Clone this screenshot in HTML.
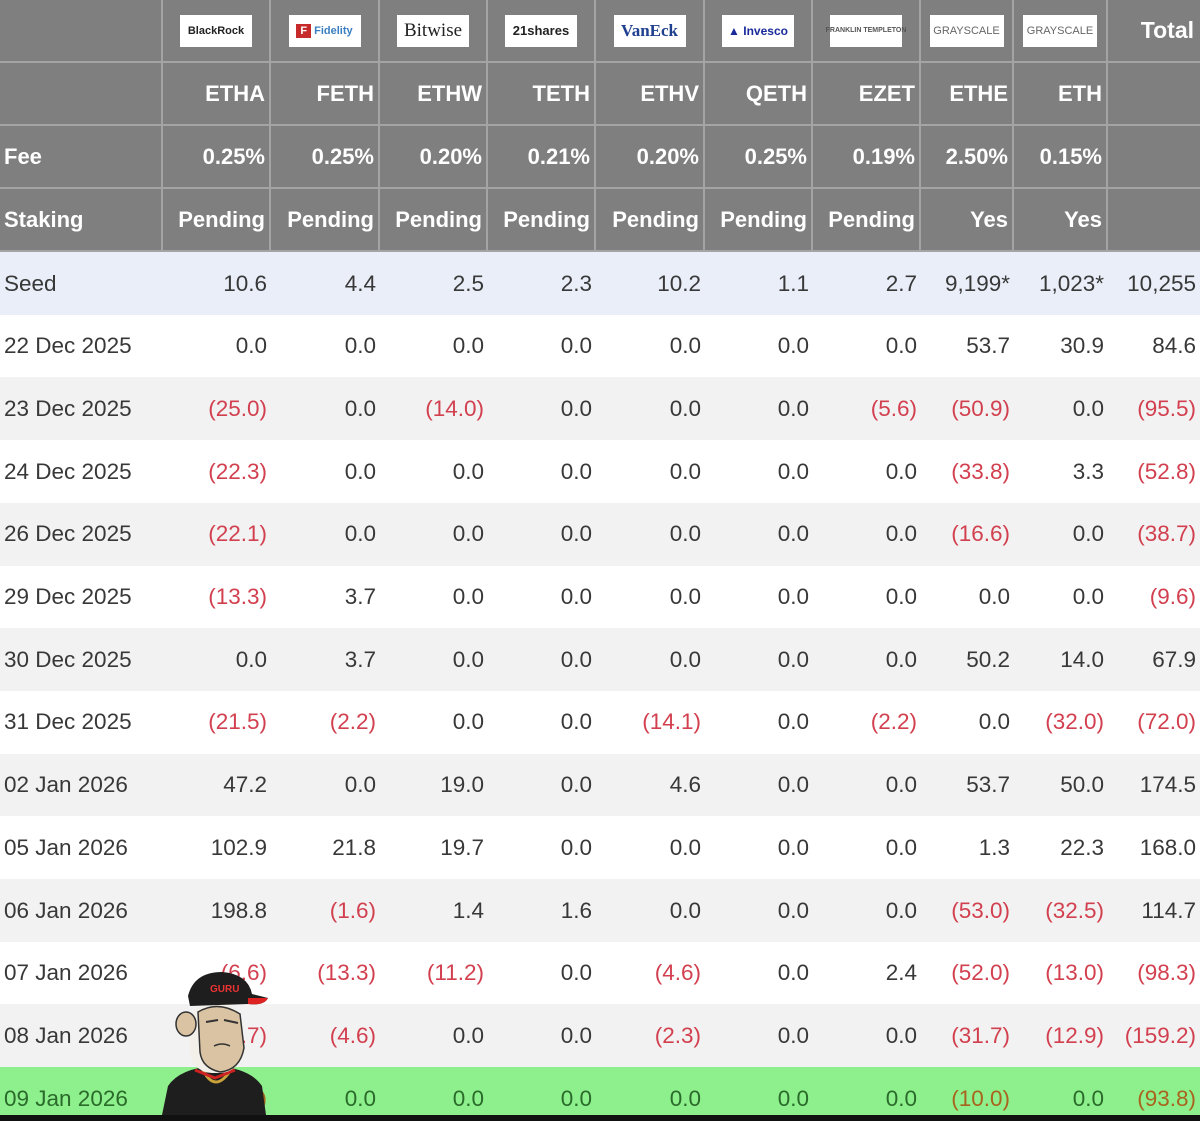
<!DOCTYPE html>
<html><head><meta charset="utf-8"><style>
*{margin:0;padding:0;box-sizing:border-box}
html,body{width:1200px;height:1121px;overflow:hidden}
body{background:#fff;font-family:"Liberation Sans",sans-serif;position:relative}
.r{position:absolute;left:0;width:1200px;height:63px;display:flex}
.r div{height:100%;display:flex;align-items:center;justify-content:flex-end;padding-right:4px;font-size:22.5px;color:#383838;white-space:nowrap}
.r div:first-child{justify-content:flex-start;padding-left:4px}
.h{background:#7f7f7f}
.h div{color:#fff;font-weight:bold;font-size:22px;border-right:2px solid #a4a4a4;border-bottom:2px solid #a4a4a4}
.h div:last-child{border-right:none}
.n{color:#d2404f!important}
.g div{color:#2a6a2a}
.g .n{color:#a8641e!important}
.c0{width:163px}.c1{width:108px}.c2{width:109px}.c3{width:108px}.c4{width:108px}.c5{width:109px}.c6{width:108px}.c7{width:108px}.c8{width:93px}.c9{width:94px}.c10{width:92px}
.logo{background:#fff;width:72px;height:32px;display:flex;align-items:center;justify-content:center;font-size:11px;color:#222;font-weight:bold;margin:0 auto}
.h0 div{justify-content:center!important;padding:0!important}
</style></head><body>
<div class="r h h0" style="top:0">
<div class="c0"></div>
<div class="c1"><span class="logo">BlackRock</span></div>
<div class="c2"><span class="logo"><span style="background:#c62a2a;color:#fff;padding:1px 4px;margin-right:3px">F</span><span style="color:#3a7fc1">Fidelity</span></span></div>
<div class="c3"><span class="logo" style="font-family:'Liberation Serif',serif;font-weight:normal;font-size:19px">Bitwise</span></div>
<div class="c4"><span class="logo" style="font-size:13px">21shares</span></div>
<div class="c5"><span class="logo" style="font-family:'Liberation Serif',serif;color:#1f3f8f;font-size:17px">VanEck</span></div>
<div class="c6"><span class="logo" style="color:#1a2a9a;font-size:12px">▲ Invesco</span></div>
<div class="c7"><span class="logo" style="font-size:7px;color:#555">FRANKLIN TEMPLETON</span></div>
<div class="c8"><span class="logo" style="font-weight:normal;color:#666;font-size:11px;width:74px">GRAYSCALE</span></div>
<div class="c9"><span class="logo" style="font-weight:normal;color:#666;font-size:11px;width:74px">GRAYSCALE</span></div>
<div class="c10" style="justify-content:flex-end!important;padding-right:6px!important;font-size:23px">Total</div>
</div>
<div class="r h" style="top:63px"><div class="c0"></div><div class="c1">ETHA</div><div class="c2">FETH</div><div class="c3">ETHW</div><div class="c4">TETH</div><div class="c5">ETHV</div><div class="c6">QETH</div><div class="c7">EZET</div><div class="c8">ETHE</div><div class="c9">ETH</div><div class="c10"></div></div>
<div class="r h" style="top:126px"><div class="c0">Fee</div><div class="c1">0.25%</div><div class="c2">0.25%</div><div class="c3">0.20%</div><div class="c4">0.21%</div><div class="c5">0.20%</div><div class="c6">0.25%</div><div class="c7">0.19%</div><div class="c8">2.50%</div><div class="c9">0.15%</div><div class="c10"></div></div>
<div class="r h" style="top:189px"><div class="c0">Staking</div><div class="c1">Pending</div><div class="c2">Pending</div><div class="c3">Pending</div><div class="c4">Pending</div><div class="c5">Pending</div><div class="c6">Pending</div><div class="c7">Pending</div><div class="c8">Yes</div><div class="c9">Yes</div><div class="c10"></div></div>

<div class="r" style="top:252px;background:#e9eef8"><div class="c0">Seed</div><div class="c1">10.6</div><div class="c2">4.4</div><div class="c3">2.5</div><div class="c4">2.3</div><div class="c5">10.2</div><div class="c6">1.1</div><div class="c7">2.7</div><div class="c8">9,199*</div><div class="c9">1,023*</div><div class="c10">10,255</div></div>
<div class="r" style="top:314.7px;background:#fff"><div class="c0">22 Dec 2025</div><div class="c1">0.0</div><div class="c2">0.0</div><div class="c3">0.0</div><div class="c4">0.0</div><div class="c5">0.0</div><div class="c6">0.0</div><div class="c7">0.0</div><div class="c8">53.7</div><div class="c9">30.9</div><div class="c10">84.6</div></div>
<div class="r" style="top:377.4px;background:#f2f2f2"><div class="c0">23 Dec 2025</div><div class="c1 n">(25.0)</div><div class="c2">0.0</div><div class="c3 n">(14.0)</div><div class="c4">0.0</div><div class="c5">0.0</div><div class="c6">0.0</div><div class="c7 n">(5.6)</div><div class="c8 n">(50.9)</div><div class="c9">0.0</div><div class="c10 n">(95.5)</div></div>
<div class="r" style="top:440.1px;background:#fff"><div class="c0">24 Dec 2025</div><div class="c1 n">(22.3)</div><div class="c2">0.0</div><div class="c3">0.0</div><div class="c4">0.0</div><div class="c5">0.0</div><div class="c6">0.0</div><div class="c7">0.0</div><div class="c8 n">(33.8)</div><div class="c9">3.3</div><div class="c10 n">(52.8)</div></div>
<div class="r" style="top:502.8px;background:#f2f2f2"><div class="c0">26 Dec 2025</div><div class="c1 n">(22.1)</div><div class="c2">0.0</div><div class="c3">0.0</div><div class="c4">0.0</div><div class="c5">0.0</div><div class="c6">0.0</div><div class="c7">0.0</div><div class="c8 n">(16.6)</div><div class="c9">0.0</div><div class="c10 n">(38.7)</div></div>
<div class="r" style="top:565.5px;background:#fff"><div class="c0">29 Dec 2025</div><div class="c1 n">(13.3)</div><div class="c2">3.7</div><div class="c3">0.0</div><div class="c4">0.0</div><div class="c5">0.0</div><div class="c6">0.0</div><div class="c7">0.0</div><div class="c8">0.0</div><div class="c9">0.0</div><div class="c10 n">(9.6)</div></div>
<div class="r" style="top:628.2px;background:#f2f2f2"><div class="c0">30 Dec 2025</div><div class="c1">0.0</div><div class="c2">3.7</div><div class="c3">0.0</div><div class="c4">0.0</div><div class="c5">0.0</div><div class="c6">0.0</div><div class="c7">0.0</div><div class="c8">50.2</div><div class="c9">14.0</div><div class="c10">67.9</div></div>
<div class="r" style="top:690.9px;background:#fff"><div class="c0">31 Dec 2025</div><div class="c1 n">(21.5)</div><div class="c2 n">(2.2)</div><div class="c3">0.0</div><div class="c4">0.0</div><div class="c5 n">(14.1)</div><div class="c6">0.0</div><div class="c7 n">(2.2)</div><div class="c8">0.0</div><div class="c9 n">(32.0)</div><div class="c10 n">(72.0)</div></div>
<div class="r" style="top:753.6px;background:#f2f2f2"><div class="c0">02 Jan 2026</div><div class="c1">47.2</div><div class="c2">0.0</div><div class="c3">19.0</div><div class="c4">0.0</div><div class="c5">4.6</div><div class="c6">0.0</div><div class="c7">0.0</div><div class="c8">53.7</div><div class="c9">50.0</div><div class="c10">174.5</div></div>
<div class="r" style="top:816.3px;background:#fff"><div class="c0">05 Jan 2026</div><div class="c1">102.9</div><div class="c2">21.8</div><div class="c3">19.7</div><div class="c4">0.0</div><div class="c5">0.0</div><div class="c6">0.0</div><div class="c7">0.0</div><div class="c8">1.3</div><div class="c9">22.3</div><div class="c10">168.0</div></div>
<div class="r" style="top:879px;background:#f2f2f2"><div class="c0">06 Jan 2026</div><div class="c1">198.8</div><div class="c2 n">(1.6)</div><div class="c3">1.4</div><div class="c4">1.6</div><div class="c5">0.0</div><div class="c6">0.0</div><div class="c7">0.0</div><div class="c8 n">(53.0)</div><div class="c9 n">(32.5)</div><div class="c10">114.7</div></div>
<div class="r" style="top:941.7px;background:#fff"><div class="c0">07 Jan 2026</div><div class="c1 n">(6.6)</div><div class="c2 n">(13.3)</div><div class="c3 n">(11.2)</div><div class="c4">0.0</div><div class="c5 n">(4.6)</div><div class="c6">0.0</div><div class="c7">2.4</div><div class="c8 n">(52.0)</div><div class="c9 n">(13.0)</div><div class="c10 n">(98.3)</div></div>
<div class="r" style="top:1004.4px;background:#f2f2f2"><div class="c0">08 Jan 2026</div><div class="c1 n">(6.7)</div><div class="c2 n">(4.6)</div><div class="c3">0.0</div><div class="c4">0.0</div><div class="c5 n">(2.3)</div><div class="c6">0.0</div><div class="c7">0.0</div><div class="c8 n">(31.7)</div><div class="c9 n">(12.9)</div><div class="c10 n">(159.2)</div></div>
<div class="r g" style="top:1067.1px;height:48px;align-items:flex-start;background:#8ef08c"><div class="c0" style="height:63px">09 Jan 2026</div><div class="c1 n" style="height:63px">(22.8)</div><div class="c2" style="height:63px">0.0</div><div class="c3" style="height:63px">0.0</div><div class="c4" style="height:63px">0.0</div><div class="c5" style="height:63px">0.0</div><div class="c6" style="height:63px">0.0</div><div class="c7" style="height:63px">0.0</div><div class="c8 n" style="height:63px">(10.0)</div><div class="c9" style="height:63px">0.0</div><div class="c10 n" style="height:63px">(93.8)</div></div>
<div style="position:absolute;left:0;top:1115px;width:1200px;height:20px;background:#111"></div>

<svg style="position:absolute;left:160px;top:968px" width="112" height="147" viewBox="0 0 112 147">
<path d="M2 147 L8 118 Q20 100 55 98 Q90 100 102 118 L106 147 Z" fill="#1e1e1e"/>
<path d="M42 100 Q55 128 72 100" fill="none" stroke="#c9a23a" stroke-width="3"/>
<path d="M35 102 L55 110 L75 102" fill="none" stroke="#c22" stroke-width="3"/>
<rect x="30" y="35" width="52" height="70" rx="22" fill="#f3f0ea"/>
<ellipse cx="26" cy="56" rx="10" ry="12" fill="#d9c3a3" stroke="#333" stroke-width="1.5"/>
<path d="M38 44 Q58 32 80 46 L84 80 Q80 102 60 104 Q42 100 40 84 Z" fill="#d9c3a3" stroke="#333" stroke-width="1.5"/>
<path d="M46 54 L58 52 M64 52 L78 55" stroke="#333" stroke-width="2"/>
<path d="M54 78 Q62 74 70 78" fill="none" stroke="#333" stroke-width="1.5"/>
<path d="M28 28 Q34 4 62 4 Q88 6 92 26 L108 30 Q104 38 88 36 L30 38 Z" fill="#1e1e1e"/>
<path d="M88 30 L108 30 Q104 38 88 36 Z" fill="#d22"/>
<text x="50" y="24" font-family="Liberation Sans,sans-serif" font-size="10" font-weight="bold" fill="#e33">GURU</text>
</svg>
</body></html>
